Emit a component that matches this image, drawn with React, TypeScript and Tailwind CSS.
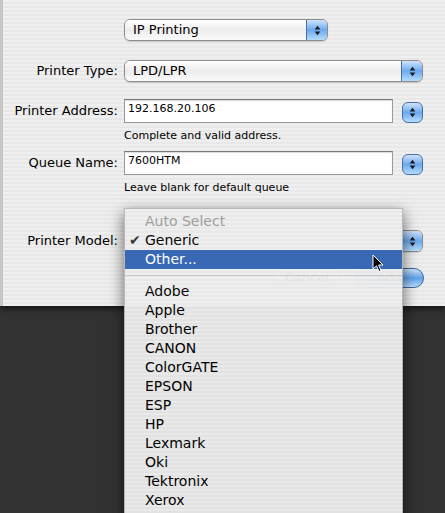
import React from 'react'

const stripes =
  'bg-[repeating-linear-gradient(180deg,#efefef_0px,#efefef_2px,#e8e8e8_2px,#e8e8e8_4px)]'

function Arrows({ className = '' }: { className?: string }) {
  return (
    <svg viewBox="0 0 8 12" className={`w-[7px] h-[11px] ${className}`}>
      <path d="M4 0.5 L7.2 4.8 L0.8 4.8 Z" fill="#1a1a1a" />
      <path d="M4 11.5 L7.2 7.2 L0.8 7.2 Z" fill="#1a1a1a" />
    </svg>
  )
}

function AquaBlue({ className = '' }: { className?: string }) {
  return (
    <div
      className={`flex items-center justify-center border border-[#4a6fa5] bg-linear-to-b from-[#cfe4fb] via-[#6aa9ec] to-[#b6dcfd] ${className}`}
    >
      <Arrows />
    </div>
  )
}

function Popup({ label, width }: { label: string; width: string }) {
  return (
    <div
      className={`${width} h-[22px] flex rounded-[6px] border border-[#8c8c8c] overflow-hidden shadow-[0_1px_1px_rgba(0,0,0,0.15)]`}
    >
      <div className="flex-1 flex items-center pl-[8px] text-[13px] text-black bg-linear-to-b from-white via-[#ececec] to-[#fafafa]">
        {label}
      </div>
      <AquaBlue className="w-[21px] border-0 border-l" />
    </div>
  )
}

function Field({ value }: { value: string }) {
  return (
    <div className="flex items-end gap-[9px]">
      <div className="w-[269px] h-[24px] bg-white border border-[#9a9a9a] border-t-[#7a7a7a] shadow-[inset_0_1px_1px_rgba(0,0,0,0.15)] pl-[3px] pt-[2px] text-[11px] text-black leading-[14px]">
        {value}
      </div>
      <AquaBlue className="w-[21px] h-[21px] rounded-[6px]" />
    </div>
  )
}

function Row({ label, children }: { label: string; children: React.ReactNode }) {
  return (
    <div className="flex items-center gap-[6px]">
      <div className="w-[115px] text-right text-[13px] text-black">{label}</div>
      {children}
    </div>
  )
}

const brands = [
  'Adobe',
  'Apple',
  'Brother',
  'CANON',
  'ColorGATE',
  'EPSON',
  'ESP',
  'HP',
  'Lexmark',
  'Oki',
  'Tektronix',
  'Xerox',
]

export default function App() {
  return (
    <div className="relative w-[445px] h-[513px] overflow-hidden bg-[#323232] font-['DejaVu_Sans',sans-serif]">
      {/* sheet */}
      <div
        className={`h-[306px] border-l-[3px] border-[#c6c6c6] ${stripes} shadow-[0_3px_6px_rgba(0,0,0,0.6)] pt-[19px]`}
      >
        <div className="pl-[121px]">
          <Popup label="IP Printing" width="w-[204px]" />
        </div>

        <div className="mt-[19px]">
          <Row label="Printer Type:">
            <Popup label="LPD/LPR" width="w-[299px]" />
          </Row>
        </div>

        <div className="mt-[17px]">
          <Row label="Printer Address:">
            <Field value="192.168.20.106" />
          </Row>
          <div className="pl-[121px] mt-[6px] text-[11px] leading-[14px] text-black">
            Complete and valid address.
          </div>
        </div>

        <div className="mt-[8px]">
          <Row label="Queue Name:">
            <Field value="7600HTM" />
          </Row>
          <div className="pl-[121px] mt-[6px] text-[11px] leading-[14px] text-black">
            Leave blank for default queue
          </div>
        </div>

        <div className="mt-[35px]">
          {/* popup is open: its menu covers the label */}
          <Row label="Printer Model:">
            <Popup label="" width="w-[299px]" />
          </Row>
        </div>

        <div className="mt-[16px] flex justify-end gap-[14px] pr-[21px]">
          <div className="w-[68px] h-[20px] rounded-full border border-[#9a9a9a] bg-linear-to-b from-white to-[#e2e2e2] flex items-center justify-center text-[13px]">
            Cancel
          </div>
          <div className="w-[69px] h-[20px] rounded-full border border-[#3d64a0] bg-linear-to-b from-[#cfe4fb] via-[#5fa2ea] to-[#b9defd] flex items-center justify-center text-[13px]">
            Add
          </div>
        </div>
      </div>

      {/* popup menu */}
      <div
        className={`absolute left-[124px] top-[208px] w-[279px] h-[320px] border border-[#b8b8b8] ${stripes} opacity-[0.97] shadow-[0_5px_14px_rgba(0,0,0,0.6)] pt-[3px] text-[14px] leading-[19px]`}
      >
        <div className="h-[19px] pl-[20px] text-[#9c9c9c]">Auto Select</div>
        <div className="flex h-[19px] text-black">
          <span className="w-[20px] pl-[4px] text-[14px] text-[#333]">✔</span>
          Generic
        </div>
        <div className="h-[19px] pl-[20px] text-white bg-[#3465b4]">Other...</div>
        <div className="h-[13px] flex items-center">
          <div className="w-full h-px bg-[#c9c9c9]" />
        </div>
        {brands.map((b) => (
          <div key={b} className="h-[19px] pl-[20px] text-black">
            {b}
          </div>
        ))}
      </div>

      {/* cursor */}
      <svg
        viewBox="0 0 12 19"
        className="absolute left-[372px] top-[254px] w-[12px] h-[19px]"
      >
        <path
          d="M1 1 L1 15 L4.5 11.8 L7 17.5 L9 16.6 L6.6 11 L11 11 Z"
          fill="#000"
          stroke="#fff"
          strokeWidth="1"
          strokeLinejoin="round"
        />
      </svg>
    </div>
  )
}
